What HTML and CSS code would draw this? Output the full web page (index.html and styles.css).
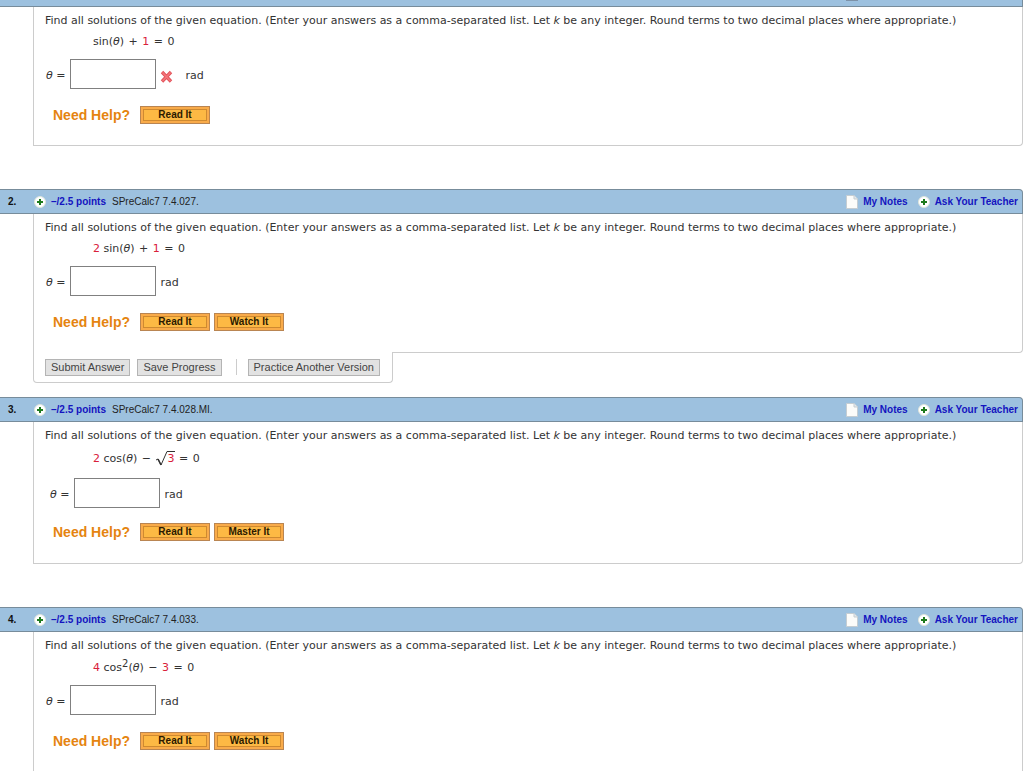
FILE: index.html
```html
<!DOCTYPE html>
<html lang="en">
<head>
  <meta charset="UTF-8">
  <title>SPreCalc7 7.4</title>
  <link rel="stylesheet" href="styles.css">
</head>
<body>
<!-- shared icons -->
<svg class="defs" width="0" height="0">
  <defs>
    <symbol id="plus" viewBox="0 0 12 12">
      <circle cx="6" cy="6" r="5.500" fill="#fff" stroke="#dde5dc"/>
      <path d="M6 3v6M3 6h6" stroke="#1d7a1d" stroke-width="2"/>
    </symbol>
    <symbol id="note" viewBox="0 0 12 14">
      <path d="M.5 .5h7.500l3.500 3.500v9.500h-11z" fill="#fcfcfa" stroke="#c5cdd2"/>
      <path d="M8 .5v3.500h3.500" fill="#e4e8ea" stroke="#c5cdd2"/>
    </symbol>
  </defs>
</svg>

<main>
  <section class="question">
    <div class="bar bar-cut"><span class="note-edge"></span></div>
    <div class="content">
      <p>Find all solutions of the given equation. (Enter your answers as a comma-separated list. Let <i>k</i> be any integer. Round terms to two decimal places where appropriate.)</p>
      <div class="equation">sin(<i>θ</i>) <span class="op">+</span> <span class="num">1</span> <span class="op">=</span> 0</div>
      <div class="answer">
        <label for="a1"><i>θ</i> =</label>
        <input type="text" id="a1">
        <svg class="wrong" width="13" height="13" viewBox="0 0 13 13">
          <path d="M2 2l9 9.500M11 2l-9 9.500" stroke="#e2525a" stroke-width="3.400"/>
          <path d="M2.500 2.500l8 8.500M10.500 2.500l-8 8.500" stroke="#f4757a" stroke-width="1.600"/>
        </svg>
        <span class="unit">rad</span>
      </div>
      <div class="help">
        <span class="help-title">Need Help?</span>
        <button class="help-button">Read It</button>
      </div>
    </div>
  </section>

  <section class="question">
    <div class="bar">
      <span class="number">2.</span>
      <svg class="plus" width="12" height="12"><use href="#plus"/></svg>
      <a class="points" href="#">–/2.5 points</a>
      <span class="source">SPreCalc7 7.4.027.</span>
      <a class="tool" href="#"><svg width="12" height="14"><use href="#note"/></svg>My Notes</a>
      <a class="tool" href="#"><svg width="12" height="12"><use href="#plus"/></svg>Ask Your Teacher</a>
    </div>
    <div class="content">
      <p>Find all solutions of the given equation. (Enter your answers as a comma-separated list. Let <i>k</i> be any integer. Round terms to two decimal places where appropriate.)</p>
      <div class="equation"><span class="num">2</span> sin(<i>θ</i>) <span class="op">+</span> <span class="num">1</span> <span class="op">=</span> 0</div>
      <div class="answer">
        <label for="a2"><i>θ</i> =</label>
        <input type="text" id="a2">
        <span class="unit">rad</span>
      </div>
      <div class="help">
        <span class="help-title">Need Help?</span>
        <button class="help-button">Read It</button>
        <button class="help-button">Watch It</button>
      </div>
    </div>
    <div class="actions">
      <button>Submit Answer</button>
      <button>Save Progress</button>
      <span class="divider"></span>
      <button>Practice Another Version</button>
    </div>
  </section>

  <section class="question">
    <div class="bar">
      <span class="number">3.</span>
      <svg class="plus" width="12" height="12"><use href="#plus"/></svg>
      <a class="points" href="#">–/2.5 points</a>
      <span class="source">SPreCalc7 7.4.028.MI.</span>
      <a class="tool" href="#"><svg width="12" height="14"><use href="#note"/></svg>My Notes</a>
      <a class="tool" href="#"><svg width="12" height="12"><use href="#plus"/></svg>Ask Your Teacher</a>
    </div>
    <div class="content radical">
      <p>Find all solutions of the given equation. (Enter your answers as a comma-separated list. Let <i>k</i> be any integer. Round terms to two decimal places where appropriate.)</p>
      <div class="equation"><span class="num">2</span> cos(<i>θ</i>) <span class="op">−</span> <svg class="root" width="12" height="15" viewBox="0 0 12 15"><path d="M0 9l2-1 3 6L11 .5H12" fill="none" stroke="#333"/><path d="M2 8l3 6" stroke="#333" stroke-width="1.500"/></svg><span class="num radicand">3</span> <span class="op">=</span> 0</div>
      <div class="answer">
        <label for="a3"><i>θ</i> =</label>
        <input type="text" id="a3">
        <span class="unit">rad</span>
      </div>
      <div class="help">
        <span class="help-title">Need Help?</span>
        <button class="help-button">Read It</button>
        <button class="help-button">Master It</button>
      </div>
    </div>
  </section>

  <section class="question">
    <div class="bar">
      <span class="number">4.</span>
      <svg class="plus" width="12" height="12"><use href="#plus"/></svg>
      <a class="points" href="#">–/2.5 points</a>
      <span class="source">SPreCalc7 7.4.033.</span>
      <a class="tool" href="#"><svg width="12" height="14"><use href="#note"/></svg>My Notes</a>
      <a class="tool" href="#"><svg width="12" height="12"><use href="#plus"/></svg>Ask Your Teacher</a>
    </div>
    <div class="content squared">
      <p>Find all solutions of the given equation. (Enter your answers as a comma-separated list. Let <i>k</i> be any integer. Round terms to two decimal places where appropriate.)</p>
      <div class="equation"><span class="num">4</span> cos<sup>2</sup>(<i>θ</i>) <span class="op">−</span> <span class="num">3</span> <span class="op">=</span> 0</div>
      <div class="answer">
        <label for="a4"><i>θ</i> =</label>
        <input type="text" id="a4">
        <span class="unit">rad</span>
      </div>
      <div class="help">
        <span class="help-title">Need Help?</span>
        <button class="help-button">Read It</button>
        <button class="help-button">Watch It</button>
      </div>
    </div>
  </section>
</main>
</body>
</html>
```
FILE: styles.css
```css
* {
  box-sizing: border-box;
}
html {
  scrollbar-width: none;
}
body {
  margin: 0;
  background: #fff;
  color: #333;
  font: 11px/18px "DejaVu Sans", Verdana, sans-serif;
}
.defs {
  position: absolute;
}
main {
  margin-right: 1px;
}
.question {
  margin-bottom: 43px;
}
.question:last-child {
  margin-bottom: 0;
}
/* blue title bar */
.bar {
  display: flex;
  align-items: center;
  height: 25px;
  padding: 0 4px 0 8px;
  background: #9dc1df;
  border: 1px solid #778c9b;
  border-left: 0;
  border-radius: 0 4px 0 0;
  font-family: "Liberation Sans", Arial, sans-serif;
  font-size: 10px;
}
.bar-cut {
  height: 7px;
  border-top: 0;
  border-radius: 0;
  align-items: flex-start;
  justify-content: flex-end;
  padding-right: 164px;
}
.note-edge {
  width: 12px;
  height: 1px;
  background: #7d92a8;
}
.number {
  width: 26px;
  font-weight: bold;
  color: #111;
}
.points {
  margin: 0 6px 0 5px;
}
.source {
  margin-right: auto;
  color: #222;
}
.bar a {
  color: #1414c0;
  font-weight: bold;
  text-decoration: none;
}
.tool {
  display: flex;
  align-items: center;
  gap: 5px;
  margin-left: 10px;
}
/* question text and answer */
.content {
  margin-left: 33px;
  padding: 5px 11px 21px;
  border: 1px solid #ccc;
  border-top: 0;
  border-radius: 0 0 4px 0;
}
p {
  margin: 0;
}
.equation {
  margin: 3px 0 8px 48px;
}
.num {
  color: #d9203a;
}
.op {
  margin: 0 1px;
}
sup {
  font-size: 10px;
  line-height: 0;
  vertical-align: 4px;
}
.answer {
  display: flex;
  align-items: center;
  height: 30px;
}
.answer label {
  margin-right: 5px;
  padding: 3px 0 0 1px;
}
.unit {
  padding-top: 3px;
}
.answer input {
  width: 86px;
  height: 30px;
  margin-right: 4px;
  border: 1px solid #808080;
}
.wrong {
  margin: 4px 12px 0 0;
}
.help {
  display: flex;
  align-items: center;
  gap: 4px;
  margin: 17px 0 0 8px;
}
.help-title {
  margin-right: 6px;
  color: #e58410;
  font: bold 14px/18px "Liberation Sans", Arial, sans-serif;
}
.help-button {
  width: 70px;
  height: 18px;
  padding: 0;
  background: #fdb944;
  border: 1px solid #b98552;
  box-shadow: inset 0 0 0 2px #f9ab4a, inset 0 0 0 3px #cf8a30;
  color: #2b1a00;
  font: bold 10px/16px "Liberation Sans", Arial, sans-serif;
}
/* square root version of the equation */
.radical {
  padding-bottom: 22px;
}
.radical .equation {
  line-height: 22px;
}
.radical .answer {
  margin-left: 4px;
}
.radical .help {
  margin-top: 15px;
}
.root {
  vertical-align: -4px;
}
.radicand {
  display: inline-block;
  line-height: 14px;
  border-top: 1px solid #333;
}
/* exponent version needs a taller line */
.squared {
  padding-bottom: 24px;
}
.squared .equation {
  margin-bottom: 7px;
  line-height: 20px;
}
/* submit buttons hanging under the question */
.actions {
  position: relative;
  display: flex;
  align-items: center;
  width: fit-content;
  height: 31px;
  margin: -1px 0 -29px 33px;
  padding: 0 12px 0 11px;
  background: #fff;
  border: 1px solid #ccc;
  border-top: 0;
  border-radius: 0 0 4px 4px;
}
.actions button {
  height: 17px;
  margin-right: 7px;
  padding: 0 5px;
  background: #e2e2e2;
  border: 1px solid #b4b4b4;
  color: #444;
  font: 11px/15px "Liberation Sans", Arial, sans-serif;
}
.actions button:last-child {
  margin-right: 0;
}
.divider {
  width: 1px;
  height: 16px;
  margin: 0 11px 0 7px;
  background: #ccc;
}
```
